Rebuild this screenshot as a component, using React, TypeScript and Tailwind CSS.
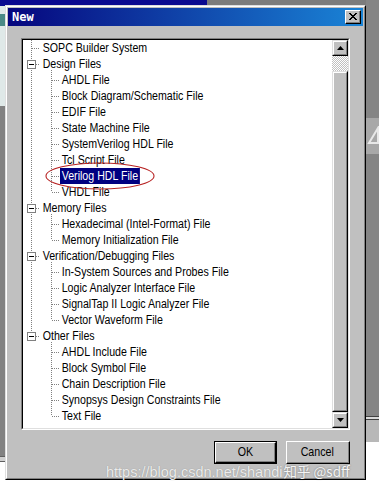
import React from "react";

type Row = { t: string; l: 1 | 2; box?: boolean; sel?: boolean };

const rows: Row[] = [
  { t: "SOPC Builder System", l: 1 },
  { t: "Design Files", l: 1, box: true },
  { t: "AHDL File", l: 2 },
  { t: "Block Diagram/Schematic File", l: 2 },
  { t: "EDIF File", l: 2 },
  { t: "State Machine File", l: 2 },
  { t: "SystemVerilog HDL File", l: 2 },
  { t: "Tcl Script File", l: 2 },
  { t: "Verilog HDL File", l: 2, sel: true },
  { t: "VHDL File", l: 2 },
  { t: "Memory Files", l: 1, box: true },
  { t: "Hexadecimal (Intel-Format) File", l: 2 },
  { t: "Memory Initialization File", l: 2 },
  { t: "Verification/Debugging Files", l: 1, box: true },
  { t: "In-System Sources and Probes File", l: 2 },
  { t: "Logic Analyzer Interface File", l: 2 },
  { t: "SignalTap II Logic Analyzer File", l: 2 },
  { t: "Vector Waveform File", l: 2 },
  { t: "Other Files", l: 1, box: true },
  { t: "AHDL Include File", l: 2 },
  { t: "Block Symbol File", l: 2 },
  { t: "Chain Description File", l: 2 },
  { t: "Synopsys Design Constraints File", l: 2 },
  { t: "Text File", l: 2 },
];

const FONT = { fontFamily: '"Liberation Sans", Arial, sans-serif' };

function TreeLines() {
  const c = (i: number) => 8 + 16 * i;
  const els: React.ReactNode[] = [];
  const dot = { stroke: "#808080", strokeWidth: 1, strokeDasharray: "1 1", shapeRendering: "crispEdges" as const };
  els.push(<line key="v1" x1={8.5} y1={0} x2={8.5} y2={c(18)} {...dot} />);
  let parent = -1;
  let last = -1;
  const groups: [number, number][] = [];
  rows.forEach((r, i) => {
    if (r.l === 1) {
      if (parent >= 0 && last > parent) groups.push([parent, last]);
      parent = r.box ? i : -1;
      last = i;
    } else last = i;
  });
  if (parent >= 0 && last > parent) groups.push([parent, last]);
  groups.forEach(([p, l], k) => {
    els.push(<line key={"g" + k} x1={28.5} y1={c(p) + 6} x2={28.5} y2={c(l)} {...dot} />);
  });
  rows.forEach((r, i) => {
    const y = c(i) + 0.5;
    if (r.l === 1) {
      els.push(<line key={"h" + i} x1={r.box ? 13 : 9} y1={y} x2={17} y2={y} {...dot} />);
    } else {
      els.push(<line key={"h" + i} x1={29} y1={y} x2={37} y2={y} {...dot} />);
    }
  });
  rows.forEach((r, i) => {
    if (r.box) {
      const y = c(i);
      els.push(
        <g key={"b" + i} shapeRendering="crispEdges">
          <rect x={4.5} y={y - 3.5} width={8} height={8} fill="#fff" stroke="#808080" />
          <line x1={6} y1={y + 0.5} x2={11} y2={y + 0.5} stroke="#000" />
        </g>
      );
    }
  });
  return (
    <svg className="absolute left-0 top-0 pointer-events-none" width={312} height={388}>
      {els}
    </svg>
  );
}

function Win95Btn({ children, def, className }: { children: React.ReactNode; def?: boolean; className?: string }) {
  return (
    <div className={`${className ?? ""} ${def ? "border border-black" : ""} flex`}>
      <div className="flex-1 flex border-t border-l border-white border-r border-b border-r-black border-b-black">
        <div className="flex-1 flex items-center justify-center border-r border-b border-[#808080] bg-[#c0c0c0] text-[13px] text-black" style={FONT}>
          <span className="inline-block scale-x-[0.82]">{children}</span>
        </div>
      </div>
    </div>
  );
}

function ArrowBtn({ up }: { up?: boolean }) {
  return (
    <div className="h-[16px] w-[16px] flex border-t border-l border-[#dfdfdf] border-r border-b border-r-black border-b-black">
      <div className="flex-1 flex items-center justify-center bg-[#c0c0c0] border-t border-l border-white border-r border-b border-r-[#808080] border-b-[#808080]">
        <svg width="7" height="4" viewBox="0 0 7 4">
          {up ? <polygon points="0,4 7,4 3.5,0" fill="#000" /> : <polygon points="0,0 7,0 3.5,4" fill="#000" />}
        </svg>
      </div>
    </div>
  );
}

export default function App() {
  return (
    <div className="relative w-[379px] h-[490px] overflow-hidden bg-white">
      {/* desktop background pieces */}
      <div className="absolute left-0 top-0 w-[207px] h-[6px] bg-[#0a0a90]" />
      <div className="absolute left-[207px] top-0 w-[172px] h-[6px] bg-[#7c7c7c]" />
      <div className="absolute left-0 top-[6px] w-[6px] h-[100px] bg-[#dfe9e8]" />
      <div className="absolute left-0 top-[14px] w-[5px] h-[12px] bg-[#4a8a86]" />
      <div className="absolute left-0 top-[106px] w-[6px] h-[350px] bg-[#828282]" />
      <div className="absolute left-0 top-[456px] w-[6px] h-[6px] bg-[#d0d0d0] border-y border-[#606060]" />
      <div className="absolute left-[366px] top-0 w-[13px] h-[118px] bg-[#858585]" />
      <div className="absolute left-[366px] top-[118px] w-[13px] h-[36px] bg-[#a8a8a8] flex items-center">
        <svg width="13" height="20"><polygon points="3,17 12,17 12,2" fill="none" stroke="#e8e8e8" strokeWidth="2" /></svg>
      </div>
      <div className="absolute left-[366px] top-[154px] w-[13px] h-[262px] bg-[#858585]" />
      <div className="absolute left-[366px] top-[416px] w-[13px] h-[4px] border-y border-[#404040] bg-[#d8d8d8]" />
      <div className="absolute left-[366px] top-[420px] w-[13px] h-[22px] bg-[#b8b8b8]" />

      {/* dialog */}
      <div className="absolute left-[5px] top-[5px] w-[361px] h-[475px] flex border-t border-l border-[#dfdfdf] border-r border-b border-r-black border-b-black">
        <div className="flex-1 flex flex-col bg-[#c0c0c0] border-t border-l border-white border-r border-b border-r-[#808080] border-b-[#808080] p-[1px]">
          {/* title bar */}
          <div className="h-[18px] flex items-center justify-between pl-[4px] pr-[2px] bg-[linear-gradient(to_right,#06067e,#1a84d6)]">
            <span className="text-white font-bold text-[12px] leading-none" style={{ fontFamily: '"DejaVu Sans Mono", monospace' }}>
              New
            </span>
            <div className="w-[16px] h-[14px] flex border-t border-l border-white border-r border-b border-r-black border-b-black">
              <div className="flex-1 flex items-center justify-center bg-[#c0c0c0] border-r border-b border-[#808080]">
                <svg width="8" height="7" viewBox="0 0 8 7" shapeRendering="crispEdges">
                  <path d="M0 0h2v1h-2zM6 0h2v1h-2zM1 1h2v1h-2zM5 1h2v1h-2zM2 2h4v1h-4zM3 3h2v1h-2zM2 4h4v1h-4zM1 5h2v1h-2zM5 5h2v1h-2zM0 6h2v1h-2zM6 6h2v1h-2z" fill="#000" />
                </svg>
              </div>
            </div>
          </div>

          {/* body */}
          <div className="flex-1 flex flex-col px-[13px] pt-[12px]">
            {/* tree panel */}
            <div className="h-[392px] flex border-t border-l border-[#808080] border-r border-b border-r-white border-b-white">
              <div className="flex-1 flex border-t border-l border-black border-r border-b border-r-[#dfdfdf] border-b-[#dfdfdf] bg-white">
                <div className="relative flex-1 overflow-hidden">
                  <TreeLines />
                  <div className="relative flex flex-col">
                    {rows.map((r, i) => (
                      <div key={i} className={`h-[16px] flex items-center ${r.l === 1 ? "pl-[18px]" : "pl-[37px]"}`}>
                        <span
                          className={`inline-block origin-left scale-x-[0.85] text-[12.5px] leading-[16px] h-[16px] px-[2px] whitespace-nowrap ${r.sel ? "bg-[#000080] text-white" : "text-black"}`}
                          style={FONT}
                        >
                          {r.t}
                        </span>
                      </div>
                    ))}
                  </div>
                  <svg className="absolute left-0 top-0 pointer-events-none" width={312} height={388}>
                    <ellipse cx={77} cy={136} rx={54} ry={13} fill="none" stroke="#b82424" strokeWidth={1.1} />
                  </svg>
                </div>
                {/* scrollbar */}
                <div className="w-[16px] flex flex-col">
                  <ArrowBtn up />
                  <div className="h-[15px] bg-[repeating-conic-gradient(#c0c0c0_0_25%,#ffffff_0_50%)] bg-[length:2px_2px]" />
                  <div className="flex-1 flex border-t border-l border-[#dfdfdf] border-r border-b border-r-black border-b-black">
                    <div className="flex-1 bg-[#c0c0c0] border-t border-l border-white border-r border-b border-r-[#808080] border-b-[#808080]" />
                  </div>
                  <ArrowBtn />
                </div>
              </div>
            </div>

            {/* buttons */}
            <div className="flex justify-end gap-[9px] mt-[11px]">
              <Win95Btn def className="w-[63px] h-[23px]">OK</Win95Btn>
              <Win95Btn className="w-[64px] h-[23px]">Cancel</Win95Btn>
            </div>
          </div>
        </div>
      </div>

      {/* watermark */}
      <div className="absolute left-[106px] top-[461px] flex items-baseline pointer-events-none">
        <span className="text-[14.5px] text-[#ececec] [text-shadow:0_0_1px_rgba(0,0,0,0.3)]" style={{ fontFamily: '"Liberation Sans", Arial, sans-serif' }}>
          https://blog.csdn.net/shandi
        </span>
        <span className="ml-[1px] text-[13.5px] text-[#f4f4f4] [text-shadow:0_0_2px_rgba(0,0,0,0.45)]" style={{ fontFamily: '"Noto Sans CJK SC", "Liberation Sans", sans-serif' }}>
          知乎 @sdff
        </span>
      </div>
    </div>
  );
}
